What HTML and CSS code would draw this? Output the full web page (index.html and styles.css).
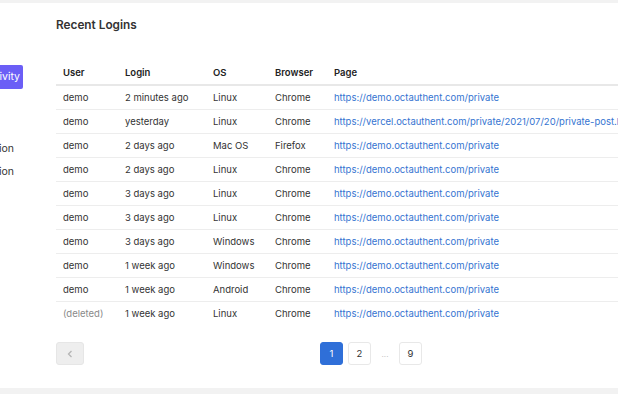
FILE: index.html
```html
<!DOCTYPE html>
<html lang="en">
<head>
    <meta charset="UTF-8">
    <title>Recent Logins</title>
    <link rel="stylesheet" href="styles.css">
</head>
<body>

<div class="panel">
    <aside class="sidebar">
        <a class="nav-item active" href="#">Activity</a>
        <div class="nav-group">
            <a class="nav-item" href="#">Configuration</a>
            <a class="nav-item" href="#">Documentation</a>
        </div>
    </aside>

    <main class="content">
        <h1 class="title">Recent Logins</h1>

        <table class="logins">
            <thead>
                <tr>
                    <th class="col-user">User</th>
                    <th class="col-login">Login</th>
                    <th class="col-os">OS</th>
                    <th class="col-browser">Browser</th>
                    <th>Page</th>
                </tr>
            </thead>
            <tbody>
                <tr><td>demo</td><td>2 minutes ago</td><td>Linux</td><td>Chrome</td><td><a href="#">https://demo.octauthent.com/private</a></td></tr>
                <tr><td>demo</td><td>yesterday</td><td>Linux</td><td>Chrome</td><td><a href="#">https://vercel.octauthent.com/private/2021/07/20/private-post.html</a></td></tr>
                <tr><td>demo</td><td>2 days ago</td><td>Mac OS</td><td>Firefox</td><td><a href="#">https://demo.octauthent.com/private</a></td></tr>
                <tr><td>demo</td><td>2 days ago</td><td>Linux</td><td>Chrome</td><td><a href="#">https://demo.octauthent.com/private</a></td></tr>
                <tr><td>demo</td><td>3 days ago</td><td>Linux</td><td>Chrome</td><td><a href="#">https://demo.octauthent.com/private</a></td></tr>
                <tr><td>demo</td><td>3 days ago</td><td>Linux</td><td>Chrome</td><td><a href="#">https://demo.octauthent.com/private</a></td></tr>
                <tr><td>demo</td><td>3 days ago</td><td>Windows</td><td>Chrome</td><td><a href="#">https://demo.octauthent.com/private</a></td></tr>
                <tr><td>demo</td><td>1 week ago</td><td>Windows</td><td>Chrome</td><td><a href="#">https://demo.octauthent.com/private</a></td></tr>
                <tr><td>demo</td><td>1 week ago</td><td>Android</td><td>Chrome</td><td><a href="#">https://demo.octauthent.com/private</a></td></tr>
                <tr><td class="deleted">(deleted)</td><td>1 week ago</td><td>Linux</td><td>Chrome</td><td><a href="#">https://demo.octauthent.com/private</a></td></tr>
            </tbody>
        </table>

        <nav class="pager">
            <button class="page-btn arrow" disabled>
                <svg width="8" height="8" viewBox="0 0 8 8"><path d="M5.5 1 L2.5 4 L5.5 7" fill="none" stroke="#b5b5b5" stroke-width="1.3"/></svg>
            </button>
            <div class="pages">
                <button class="page-btn current">1</button>
                <button class="page-btn">2</button>
                <span class="dots">...</span>
                <button class="page-btn">9</button>
            </div>
            <button class="page-btn arrow">
                <svg width="8" height="8" viewBox="0 0 8 8"><path d="M2.5 1 L5.5 4 L2.5 7" fill="none" stroke="#555" stroke-width="1.3"/></svg>
            </button>
        </nav>
    </main>
</div>

</body>
</html>
```

FILE: styles.css
```css
html, body {
    overflow: hidden;
}

body {
    margin: 0;
    padding-top: 3px;
    background-color: #f2f2f2;
    font-family: Inter, 'Noto Sans', sans-serif;
    font-size: 9.5px;
    color: #333;
}

.panel {
    display: flex;
    gap: 33px;
    background-color: #fff;
    padding-bottom: 23px;
}

/* sidebar is mostly scrolled off to the left */
.sidebar {
    width: 23px;
    flex-shrink: 0;
    overflow: hidden;
    padding-top: 62px;
    font-size: 10.5px;
}
.nav-item {
    display: flex;
    justify-content: flex-end;
    white-space: nowrap;
    text-decoration: none;
    color: #333;
    height: 23px;
    line-height: 23px;
    padding-right: 9px;
}
.nav-item.active {
    background-color: #6b5ef6;
    color: #fff;
    height: 24px;
    line-height: 24px;
    padding-right: 3px;
    border-radius: 0 2px 2px 0;
}
.nav-group {
    margin-top: 48px;
}

.content {
    width: 630px;
    flex-shrink: 0;
    padding-top: 13px;
}
.title {
    margin: 0 0 26px;
    font-size: 11.8px;
    line-height: 18px;
    font-weight: 600;
    color: #333;
}

.logins {
    width: 100%;
    border-collapse: collapse;
}
.logins th {
    text-align: left;
    font-weight: 600;
    color: #222;
    height: 24px;
    padding: 0 7px;
    border-bottom: 2px solid #e8e8e8;
}
.logins td {
    height: 23px;
    padding: 0 7px;
    white-space: nowrap;
    border-bottom: 1px solid #ededed;
}
.logins tbody tr:last-child td {
    border-bottom: none;
}
.col-user { width: 48px; }
.col-login { width: 74px; }
.col-os { width: 48px; }
.col-browser { width: 45px; }
.logins a {
    color: #3574d1;
    text-decoration: none;
}
.deleted {
    color: #8a8a8a;
}

.pager {
    display: flex;
    justify-content: space-between;
    align-items: center;
    margin-top: 17px;
}
.pages {
    display: flex;
    align-items: center;
    gap: 5px;
}
.page-btn {
    width: 23px;
    height: 23px;
    padding: 0;
    border: 1px solid #e8e8e8;
    border-radius: 3px;
    background-color: #fff;
    color: #333;
    font-family: inherit;
    font-size: 9.5px;
    display: flex;
    align-items: center;
    justify-content: center;
}
.page-btn.current {
    background-color: #2f6fd8;
    border-color: #2f6fd8;
    color: #fff;
}
.page-btn.arrow {
    width: 28px;
}
.page-btn.arrow[disabled] {
    background-color: #eeeeee;
    border-color: #e6e6e6;
}
.dots {
    width: 18px;
    text-align: center;
    color: #c0c0c0;
    font-size: 8px;
}
```
